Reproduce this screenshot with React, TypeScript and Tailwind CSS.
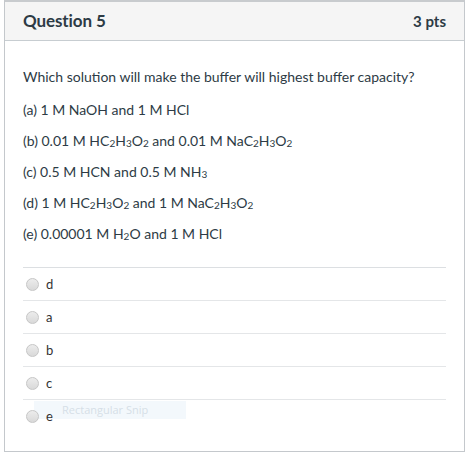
import React from "react";

const Sub = ({ children }: { children: React.ReactNode }) => (
  <sub className="text-[10px] leading-none relative top-[1px] align-baseline">{children}</sub>
);

function Radio() {
  return (
    <span className="inline-block w-[13px] h-[13px] rounded-full border border-[#c6c6c6] bg-gradient-to-b from-[#ececec] to-[#d9d9d9] shrink-0" />
  );
}

export default function App() {
  const choices = ["d", "a", "b", "c", "e"];
  return (
    <div className="w-[474px] h-[457px] bg-white pl-[4px] pt-0" style={{ fontFamily: "Lato, 'Open Sans', sans-serif" }}>
      <div className="w-[461px] h-[452px] border border-[#c4c8cc] border-t-2 border-t-[#c8cbce] flex flex-col relative">
        <div className="absolute left-[29px] top-[399px] w-[152px] h-[18px] bg-[#f3f8fc] flex items-center pl-[28px]">
          <span className="text-[11px] text-[#d6dfe7]" style={{ fontFamily: "'Open Sans', sans-serif" }}>Rectangular Snip</span>
        </div>
        <div className="h-[39px] bg-[#f5f5f5] border-b border-[#c7cdd1] flex items-center justify-between px-[18px] shrink-0">
          <span className="text-[17px] font-bold text-[#2d3b45] tracking-[-0.1px]">Question 5</span>
          <span className="text-[15px] font-bold text-[#2d3b45]">3 pts</span>
        </div>
        <div className="relative px-[18px] pt-[26px] text-[14px] leading-[20px] text-[#2d3b45]">
          <p>Which solution will make the buffer will highest buffer capacity?</p>
          <p className="mt-[13px]">(a) 1 M NaOH and 1 M HCl</p>
          <p className="mt-[11px]">(b) 0.01 M HC<Sub>2</Sub>H<Sub>3</Sub>O<Sub>2</Sub> and 0.01 M NaC<Sub>2</Sub>H<Sub>3</Sub>O<Sub>2</Sub></p>
          <p className="mt-[11px]">(c) 0.5 M HCN and 0.5 M NH<Sub>3</Sub></p>
          <p className="mt-[11px]">(d) 1 M HC<Sub>2</Sub>H<Sub>3</Sub>O<Sub>2</Sub> and 1 M NaC<Sub>2</Sub>H<Sub>3</Sub>O<Sub>2</Sub></p>
          <p className="mt-[11px]">(e) 0.00001 M H<Sub>2</Sub>O and 1 M HCl</p>
          <div className="mt-[23px]">
            {choices.map((c, i) => (
              <div key={c} className={`h-[33px] flex items-center gap-[7px] pl-[3px] border-t ${i === 0 ? "border-[#dcdfe2]" : "border-[#e4e6e8]"}`}>
                <Radio />
                <span className="text-[13px] text-[#333] leading-none">{c}</span>
              </div>
            ))}
          </div>
        </div>
      </div>
    </div>
  );
}
